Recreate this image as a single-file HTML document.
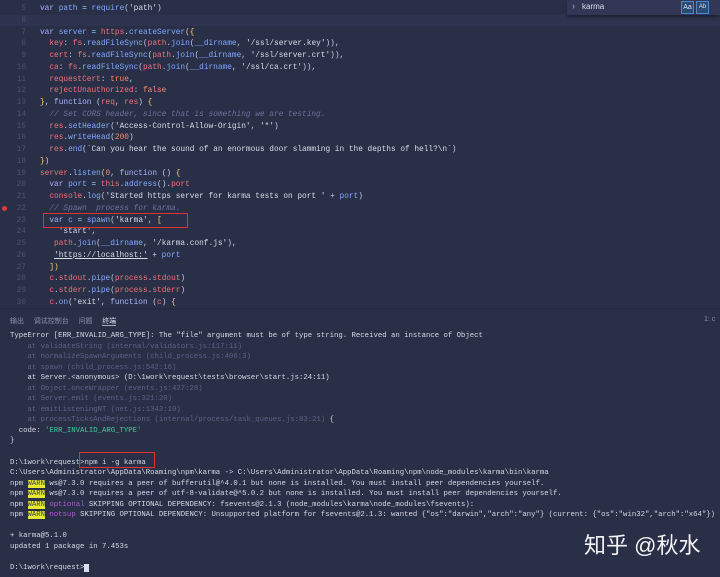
<!DOCTYPE html>
<html><head><meta charset="utf-8"><style>
body{margin:0;width:720px;height:577px;background:#292f47;overflow:hidden;position:relative;font-family:"Liberation Mono",monospace}
.ed{position:absolute;left:0;top:4px;width:720px;height:304px;overflow:hidden;font-size:7.8px;line-height:11.75px;color:#c8cbe0;white-space:pre}
.ln{position:absolute;left:0;top:0;width:26px;text-align:right;color:#4a5276}
.cd{position:absolute;left:40px;top:0}
.k{color:#a9b4ff}.v{color:#82aaff}.p{color:#f07178}.f{color:#82aaff}.s{color:#d8dbe8}.c{color:#6a7399;font-style:italic}.o{color:#89ddff}.y{color:#ffcb6b}.n{color:#f78c6c}
.term{position:absolute;left:10px;top:331px;font-size:7.3px;line-height:10.55px;color:#d6d9e6;white-space:pre}
.g{color:#5b6285}.gr{color:#3ecf9a}
.w{background:#e8e832;color:#3a3f5a}.m{color:#b05ad0}
.box{position:absolute;border:1.5px solid #e03030}
</style></head><body>
<div style="position:absolute;left:0;top:15px;width:720px;height:11px;background:#2e3450"></div>
<div class="ed"><div class="ln">5
6
7
8
9
10
11
12
13
14
15
16
17
18
19
20
21
22
23
24
25
26
27
28
29
30</div><div class="cd"><span class="k">var</span> <span class="v">path</span> <span class="o">=</span> <span class="f">require</span>(<span class="s">'path'</span>)

<span class="k">var</span> <span class="v">server</span> <span class="o">=</span> <span class="p">https</span>.<span class="f">createServer</span><span class="y">({</span>
  <span class="p">key</span>: <span class="p">fs</span>.<span class="f">readFileSync</span>(<span class="p">path</span>.<span class="f">join</span>(<span class="v">__dirname</span>, <span class="s">'/ssl/server.key'</span>)),
  <span class="p">cert</span>: <span class="p">fs</span>.<span class="f">readFileSync</span>(<span class="p">path</span>.<span class="f">join</span>(<span class="v">__dirname</span>, <span class="s">'/ssl/server.crt'</span>)),
  <span class="p">ca</span>: <span class="p">fs</span>.<span class="f">readFileSync</span>(<span class="p">path</span>.<span class="f">join</span>(<span class="v">__dirname</span>, <span class="s">'/ssl/ca.crt'</span>)),
  <span class="p">requestCert</span>: <span class="n">true</span>,
  <span class="p">rejectUnauthorized</span>: <span class="n">false</span>
<span class="y">}</span>, <span class="k">function</span> (<span class="p">req</span>, <span class="p">res</span>) <span class="y">{</span>
  <span class="c">// Set CORS header, since that is something we are testing.</span>
  <span class="p">res</span>.<span class="f">setHeader</span>(<span class="s">'Access-Control-Allow-Origin'</span>, <span class="s">'*'</span>)
  <span class="p">res</span>.<span class="f">writeHead</span>(<span class="n">200</span>)
  <span class="p">res</span>.<span class="f">end</span>(<span class="s">`Can you hear the sound of an enormous door slamming in the depths of hell?\n`</span>)
<span class="y">})</span>
<span class="p">server</span>.<span class="f">listen</span>(<span class="n">0</span>, <span class="k">function</span> () <span class="y">{</span>
  <span class="k">var</span> <span class="v">port</span> <span class="o">=</span> <span class="p">this</span>.<span class="f">address</span>().<span class="p">port</span>
  <span class="p">console</span>.<span class="f">log</span>(<span class="s">'Started https server for karma tests on port '</span> + <span class="v">port</span>)
  <span class="c">// Spawn  process for karma.</span>
  <span class="k">var</span> <span class="v">c</span> <span class="o">=</span> <span class="f">spawn</span>(<span class="s">'karma'</span>, <span class="y">[</span>
    <span class="s">'start'</span>,
   <span class="p">path</span>.<span class="f">join</span>(<span class="v">__dirname</span>, <span class="s">'/karma.conf.js'</span>),
   <span class="s" style="text-decoration:underline">'https://localhost:'</span> + <span class="v">port</span>
  <span class="y">])</span>
  <span class="p">c</span>.<span class="p">stdout</span>.<span class="f">pipe</span>(<span class="p">process</span>.<span class="p">stdout</span>)
  <span class="p">c</span>.<span class="p">stderr</span>.<span class="f">pipe</span>(<span class="p">process</span>.<span class="p">stderr</span>)
  <span class="p">c</span>.<span class="f">on</span>(<span class="s">'exit'</span>, <span class="k">function</span> (<span class="p">c</span>) <span class="y">{</span></div></div>
<div style="position:absolute;left:567px;top:0;width:153px;height:15px;background:#313754;box-shadow:0 2px 3px #1c2033"></div>
<div style="position:absolute;left:572px;top:1px;font-family:'Liberation Sans';font-size:9px;color:#aab">›</div>
<div style="position:absolute;left:582px;top:2px;font-family:'Liberation Sans';font-size:8px;color:#dde">karma</div>
<div style="position:absolute;left:681px;top:1px;width:11px;height:11px;border:1px solid #4b88c8;background:#2e4a70;color:#dde;font:7px 'Liberation Sans';text-align:center;line-height:11px">Aa</div>
<div style="position:absolute;left:696px;top:1px;width:11px;height:11px;border:1px solid #4b88c8;background:#2e4a70;color:#dde;font:6px 'Liberation Sans';text-align:center;line-height:11px">Ab</div>
<div style="position:absolute;left:2px;top:206px;width:5px;height:5px;border-radius:50%;background:#e03a3a"></div>
<div class="box" style="left:43px;top:213px;width:143px;height:13px"></div>
<div style="position:absolute;left:0;top:308px;width:720px;height:2px;background:#262b42"></div>
<div style="position:absolute;left:10px;top:316px;font:7px 'Liberation Sans','Noto Sans CJK SC',sans-serif;color:#8a90ad">输出 &nbsp;&nbsp;&nbsp; 调试控制台 &nbsp;&nbsp;&nbsp; 问题 &nbsp;&nbsp;&nbsp; <span style="color:#dde;border-bottom:1px solid #aab">终端</span></div>
<div style="position:absolute;left:704px;top:316px;font:7px 'Liberation Sans';color:#8a90ad">1: c</div>
<div class="term">TypeError [ERR_INVALID_ARG_TYPE]: The "file" argument must be of type string. Received an instance of Object
<span class="g">    at validateString (internal/validators.js:117:11)
    at normalizeSpawnArguments (child_process.js:406:3)
    at spawn (child_process.js:542:16)</span>
    at Server.&lt;anonymous&gt; (D:\1work\request\tests\browser\start.js:24:11)
<span class="g">    at Object.onceWrapper (events.js:427:28)
    at Server.emit (events.js:321:20)
    at emitListeningNT (net.js:1343:10)
    at processTicksAndRejections (internal/process/task_queues.js:83:21)</span> {
  code: <span class="gr">'ERR_INVALID_ARG_TYPE'</span>
}

D:\1work\request&gt;npm i -g karma
C:\Users\Administrator\AppData\Roaming\npm\karma -&gt; C:\Users\Administrator\AppData\Roaming\npm\node_modules\karma\bin\karma
npm <span class="w">WARN</span> ws@7.3.0 requires a peer of bufferutil@^4.0.1 but none is installed. You must install peer dependencies yourself.
npm <span class="w">WARN</span> ws@7.3.0 requires a peer of utf-8-validate@^5.0.2 but none is installed. You must install peer dependencies yourself.
npm <span class="w">WARN</span> <span class="m">optional</span> SKIPPING OPTIONAL DEPENDENCY: fsevents@2.1.3 (node_modules\karma\node_modules\fsevents):
npm <span class="w">WARN</span> <span class="m">notsup</span> SKIPPING OPTIONAL DEPENDENCY: Unsupported platform for fsevents@2.1.3: wanted {"os":"darwin","arch":"any"} (current: {"os":"win32","arch":"x64"})

+ karma@5.1.0
updated 1 package in 7.453s

D:\1work\request&gt;<span style="background:#dde">&nbsp;</span></div>
<div class="box" style="left:79px;top:452px;width:74px;height:14px"></div>
<div style="position:absolute;left:584px;top:528px;font:22px 'Liberation Sans','Noto Sans CJK SC',sans-serif;color:#f4f4f8">知乎 @秋水</div>
</body></html>
